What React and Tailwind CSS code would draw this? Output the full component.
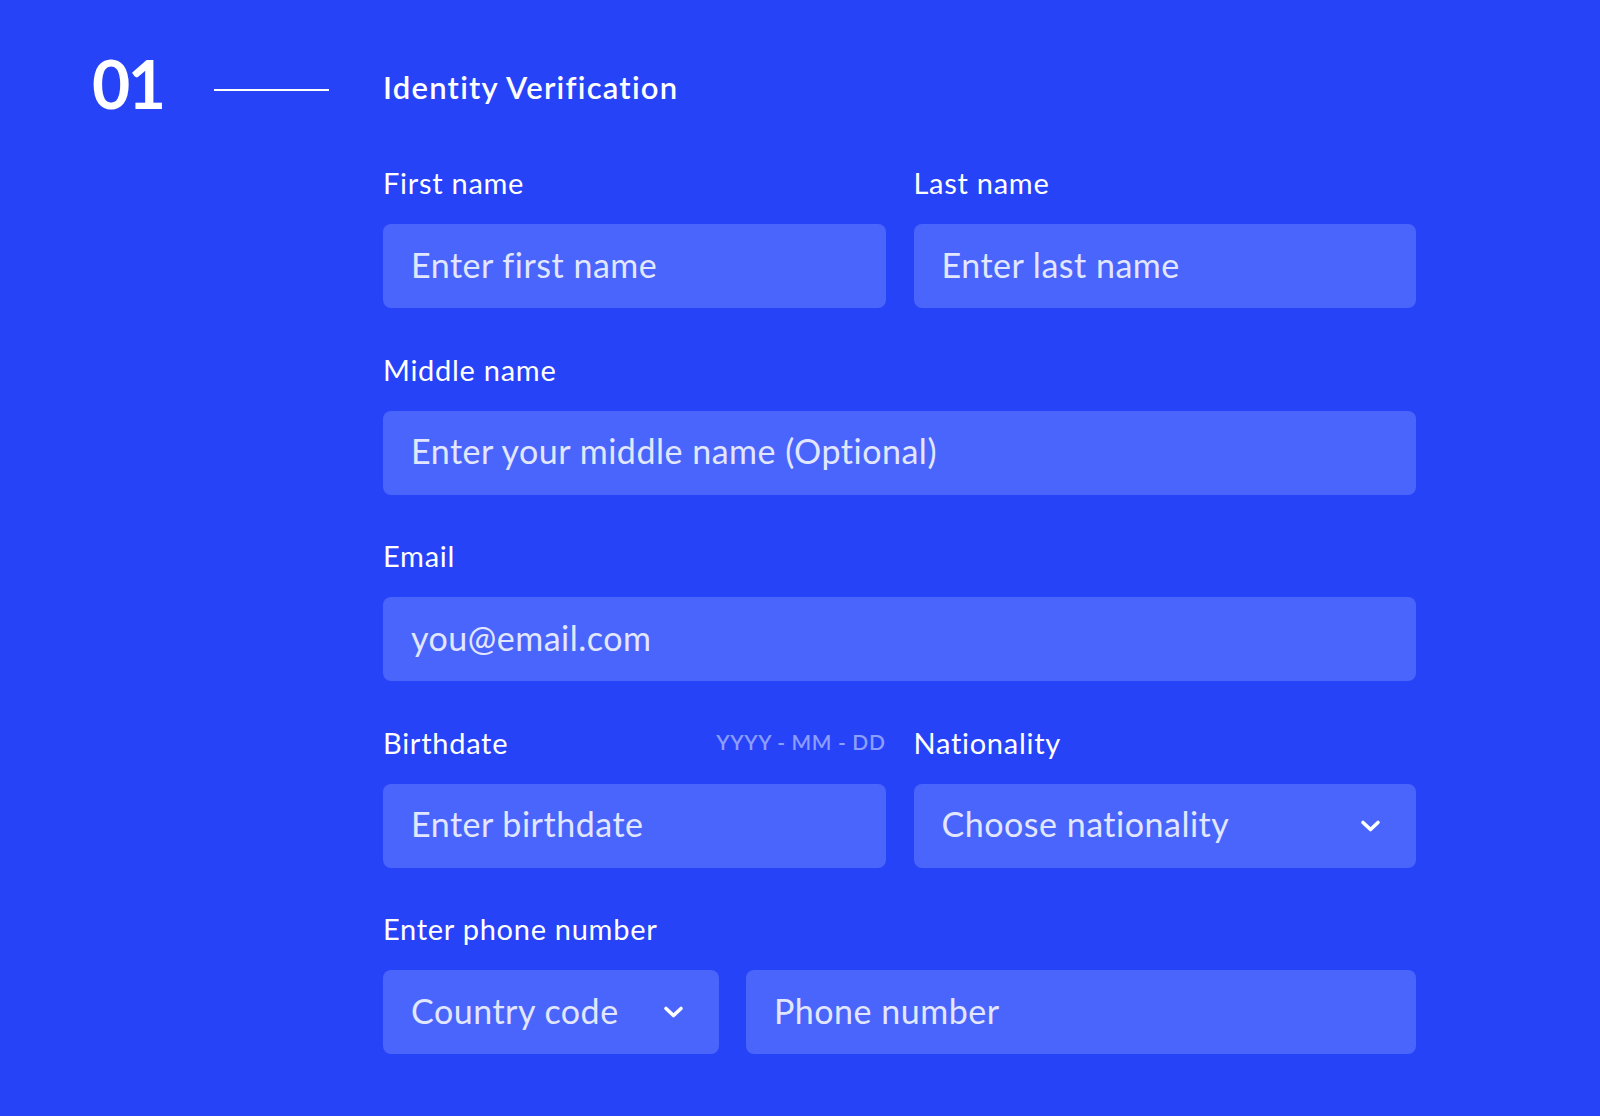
import React from 'react';

const Chevron = () => (
  <svg width="21" height="14" viewBox="0 0 21 14" fill="none" className="shrink-0">
    <path d="M3 3.5L10.5 10.5L18 3.5" stroke="white" strokeWidth="3.6" strokeLinecap="round" strokeLinejoin="round" />
  </svg>
);

const Field = ({ label, placeholder, hint, select }) => (
  <div className="flex flex-col">
    <div className="flex items-start justify-between">
      <span className="text-[29px] leading-[34px] tracking-[0.025em] text-white">{label}</span>
      {hint && (
        <span className="mt-[2px] text-[21px] leading-[28px] font-semibold tracking-[0.03em] text-[#8c9eff]">{hint}</span>
      )}
    </div>
    <Box placeholder={placeholder} select={select} className="mt-[24px]" />
  </div>
);

const Box = ({ placeholder, select, className = '' }) => (
  <div className={`flex h-[84px] items-center justify-between rounded-[8px] bg-[#4a65fb] pl-[28px] pr-[35px] ${className}`}>
    <span className="pb-[3px] text-[34px] leading-[40px] tracking-[0.015em] text-[#e2e7ff]">{placeholder}</span>
    {select && <Chevron />}
  </div>
);

export default function App() {
  return (
    <div className="min-h-screen w-full bg-[#2743f8] pl-[92px] pt-[47px] pb-[62px] font-['Lato',sans-serif] text-white">
      {/* header */}
      <div className="flex h-[70px] items-center">
        <span className="mt-[3px] w-[122px] text-[66px] font-bold leading-none tracking-[-0.04em]">01</span>
        <div className="mt-[16px] h-[2px] w-[115px] bg-white" />
        <h1 className="ml-[54px] mt-[10px] text-[31px] font-semibold leading-none tracking-[0.04em]">Identity Verification</h1>
      </div>

      {/* form */}
      <div className="ml-[291px] mt-[49px] flex w-[1033px] flex-col gap-y-[44.5px]">
        <div className="grid grid-cols-2 gap-x-[28px]">
          <Field label="First name" placeholder="Enter first name" />
          <Field label="Last name" placeholder="Enter last name" />
        </div>
        <Field label="Middle name" placeholder="Enter your middle name (Optional)" />
        <Field label="Email" placeholder="you@email.com" />
        <div className="grid grid-cols-2 gap-x-[28px]">
          <Field label="Birthdate" hint="YYYY - MM - DD" placeholder="Enter birthdate" />
          <Field label="Nationality" placeholder="Choose nationality" select />
        </div>
        <div className="flex flex-col">
          <span className="text-[29px] leading-[34px] tracking-[0.025em] text-white">Enter phone number</span>
          <div className="mt-[24px] flex gap-x-[27px]">
            <Box placeholder="Country code" select className="w-[336px]" />
            <Box placeholder="Phone number" className="flex-1" />
          </div>
        </div>
      </div>
    </div>
  );
}
